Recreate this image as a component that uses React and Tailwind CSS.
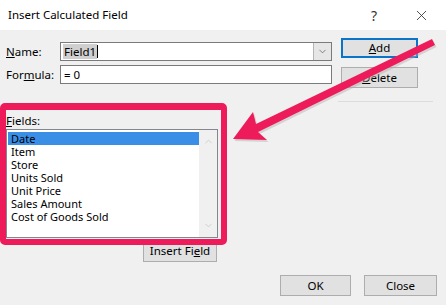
import React from "react";
import { ChevronDown, ChevronUp, X } from "lucide-react";

const fields = ["Date", "Item", "Store", "Units Sold", "Unit Price", "Sales Amount", "Cost of Goods Sold"];

function Btn({ children, className = "" }) {
  return (
    <div
      className={`flex items-center justify-center bg-[#e1e1e1] border border-[#adadad] text-[11.5px] text-black ${className}`}
    >
      {children}
    </div>
  );
}

export default function App() {
  return (
    <div
      className="relative w-[446px] h-[305px] overflow-hidden bg-[#f0f0f0] text-black"
      style={{ fontFamily: '"Noto Sans", "Open Sans", sans-serif' }}
    >
      {/* title bar */}
      <div className="flex items-center h-[30px] bg-white pl-2 pr-[16px]">
        <span className="text-[11.5px]">Insert Calculated Field</span>
        <span className="ml-auto mr-[36px] text-[14px] text-[#333]">?</span>
        <X size={17} strokeWidth={1.2} className="text-[#333]" />
      </div>

      {/* top rows */}
      <div className="flex">
        <div className="flex flex-col gap-[4px] mt-[12px] pl-[6px] text-[11.5px]">
          <div className="flex items-center h-[19px]">
            <span className="w-[54px]">
              <span className="underline">N</span>ame:
            </span>
            <div className="flex h-[19px] w-[272px] bg-white border border-[#7a7a7a]">
              <div className="flex items-center flex-1 pl-[2px]">
                <span className="bg-[#cfcfcf] px-[1px] leading-[15px]">Field1</span>
                <span className="w-px h-[13px] bg-black" />
              </div>
              <div className="flex items-center justify-center w-[18px] bg-[#e6e6e6] border-l border-[#b5b5b5]">
                <ChevronDown size={11} strokeWidth={1.5} className="text-[#555]" />
              </div>
            </div>
          </div>
          <div className="flex items-center h-[19px]">
            <span className="w-[54px]">
              For<span className="underline">m</span>ula:
            </span>
            <div className="flex items-center h-[19px] w-[272px] bg-white border border-[#7a7a7a] pl-[3px]">
              = 0
            </div>
          </div>
        </div>
        <div className="flex flex-col gap-[9px] mt-[8px] ml-[9px]">
          <div className="flex items-center justify-center w-[77px] h-[20px] bg-[#e1e1e1] border-2 border-[#0a74c8] text-[11.5px]">
            <span>
              <span className="underline">A</span>dd
            </span>
          </div>
          <Btn className="w-[77px] h-[21px]">
            <span>
              <span className="underline">D</span>elete
            </span>
          </Btn>
        </div>
      </div>

      {/* separator */}
      <div className="ml-[338px] mt-[13px] w-[95px] h-px bg-[#dcdcdc]" />

      {/* fields */}
      <div className="pl-[6px] mt-[12px] text-[11.5px] leading-[14px]">
        <span className="underline">F</span>ields:
      </div>
      <div className="flex ml-[6px] mt-px w-[212px] h-[109px] bg-white border border-[#828790]">
        <div className="flex flex-col flex-1 pt-[2px] pl-[1px] text-[11px] leading-[13px]">
          {fields.map((f, i) => (
            <div key={f} className={`pl-[3px] h-[13px] ${i === 0 ? "bg-[#3a8ee6] text-black" : ""}`}>
              {f}
            </div>
          ))}
        </div>
        <div className="flex flex-col items-center justify-between w-[18px] bg-[#f0f0f0] py-[6px]">
          <ChevronUp size={11} strokeWidth={1.5} className="text-[#c2c2c2]" />
          <ChevronDown size={11} strokeWidth={1.5} className="text-[#c2c2c2]" />
        </div>
      </div>

      <Btn className="ml-[143px] mt-[2px] w-[74px] h-[22px]">
        <span>
          Insert Fi<span className="underline">e</span>ld
        </span>
      </Btn>

      <div className="flex justify-end gap-[13px] pr-[9px] mt-[13px]">
        <Btn className="w-[71px] h-[21px]">OK</Btn>
        <Btn className="w-[73px] h-[21px]">Close</Btn>
      </div>

      {/* annotation: highlight box */}
      <div className="absolute left-0 top-[103px] w-[227px] h-[142px] border-[6px] border-t-[7px] border-[#ee1b5b] rounded-[5px]" />

      {/* annotation: arrow */}
      <svg className="absolute left-0 top-0" width="446" height="305" viewBox="0 0 446 305">
        <polygon
          points="233,139 253,112 256,124 432,39 435,45 258,132 267,140"
          fill="#b4a8aa"
          opacity="0.45"
          transform="translate(1.5,2)"
        />
        <polygon points="233,139 253,112 256,124 432,39 435,45 258,132 267,140" fill="#ee1b5b" />
      </svg>
    </div>
  );
}
